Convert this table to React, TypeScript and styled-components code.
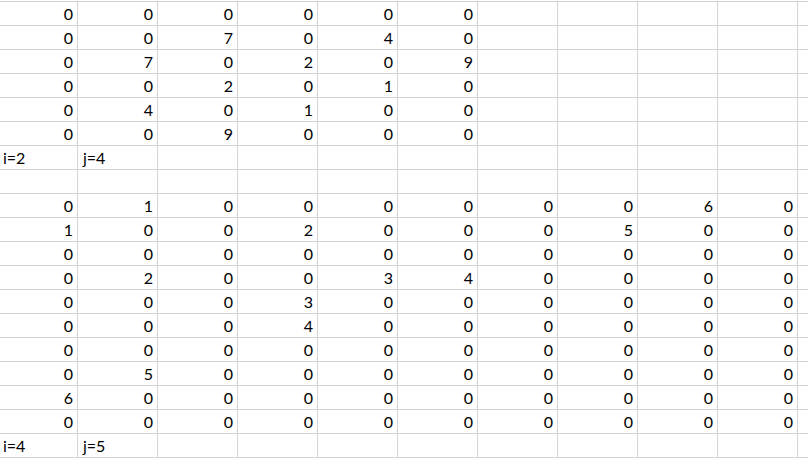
import React from "react";
import styled, { createGlobalStyle } from "styled-components";

const GlobalStyle = createGlobalStyle`
  html, body {
    margin: 0;
    padding: 0;
    background: #ffffff;
    overflow: hidden;
  }
`;

type CellValue = number | string | null;

const COLS = 11;

// rows as shown on the sheet; null = empty cell
const rows: CellValue[][] = [
  [0, 0, 0, 0, 0, 0],
  [0, 0, 7, 0, 4, 0],
  [0, 7, 0, 2, 0, 9],
  [0, 0, 2, 0, 1, 0],
  [0, 4, 0, 1, 0, 0],
  [0, 0, 9, 0, 0, 0],
  ["i=2", "j=4"],
  [],
  [0, 1, 0, 0, 0, 0, 0, 0, 6, 0],
  [1, 0, 0, 2, 0, 0, 0, 5, 0, 0],
  [0, 0, 0, 0, 0, 0, 0, 0, 0, 0],
  [0, 2, 0, 0, 3, 4, 0, 0, 0, 0],
  [0, 0, 0, 3, 0, 0, 0, 0, 0, 0],
  [0, 0, 0, 4, 0, 0, 0, 0, 0, 0],
  [0, 0, 0, 0, 0, 0, 0, 0, 0, 0],
  [0, 5, 0, 0, 0, 0, 0, 0, 0, 0],
  [6, 0, 0, 0, 0, 0, 0, 0, 0, 0],
  [0, 0, 0, 0, 0, 0, 0, 0, 0, 0],
  ["i=4", "j=5"],
];

export default function App() {
  return (
    <>
      <GlobalStyle />
      <Sheet>
        <Grid>
          {rows.map((row, r) =>
            Array.from({ length: COLS }).map((_, c) => {
              const v = row[c];
              const isText = typeof v === "string";
              return (
                <Cell key={`${r}-${c}`} $text={isText}>
                  {v === undefined || v === null ? "" : v}
                </Cell>
              );
            })
          )}
        </Grid>
      </Sheet>
    </>
  );
}

const Sheet = styled.div`
  width: 808px;
  height: 458px;
  overflow: hidden;
  padding-top: 1px;
  box-sizing: border-box;
`;

const Grid = styled.div`
  display: grid;
  grid-template-columns: repeat(${COLS}, 80px);
  grid-auto-rows: 24px;
  margin-left: -2px;
  border-top: 1px solid #d4d4d4;
  font-family: Lato, "Liberation Sans", sans-serif;
  font-size: 16px;
  color: #000000;
`;

const Cell = styled.div<{ $text: boolean }>`
  box-sizing: border-box;
  border-right: 1px solid #d4d4d4;
  border-bottom: 1px solid #d4d4d4;
  display: flex;
  align-items: flex-end;
  justify-content: ${(p) => (p.$text ? "flex-start" : "flex-end")};
  padding: ${(p) => (p.$text ? "0 0 2px 5px" : "0 4px 2px 0")};
  line-height: 19px;
  white-space: nowrap;
`;
